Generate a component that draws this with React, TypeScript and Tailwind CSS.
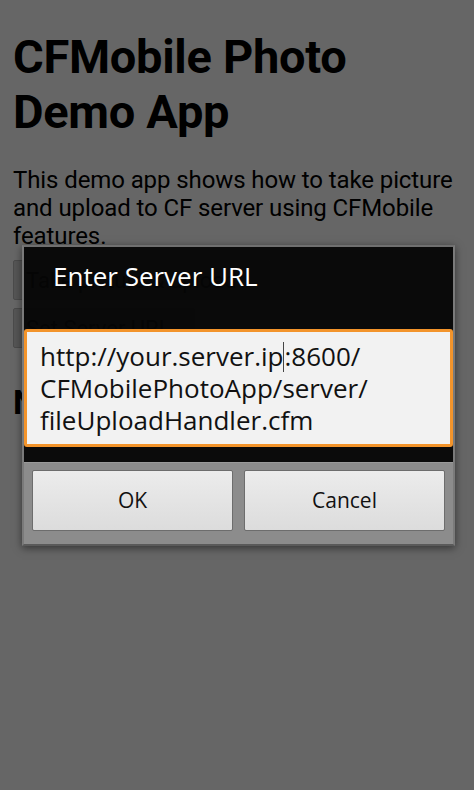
export default function App() {
  return (
    <div className="relative w-[474px] h-[790px] overflow-hidden bg-white font-['Roboto',sans-serif] text-black">
      {/* Page behind the dialog */}
      <div className="px-[13px] pt-[29px]">
        <h1 className="text-[47px] leading-[55px] font-bold tracking-[-0.3px]">
          CFMobile Photo
          <br />
          Demo App
        </h1>
        <p className="mt-[27px] text-[24px] leading-[28px] tracking-[-0.1px]">
          This demo app shows how to take picture and upload to CF server using CFMobile features.
        </p>
        <div className="mt-[10px] flex flex-col items-start gap-[8px]">
          <button className="h-[40px] w-[257px] rounded-[2px] bg-[#d6d6d6] border border-[#bbbbbb] px-3 text-left text-[22px]">
            Take picture &amp; upload
          </button>
          <button className="h-[40px] w-[182px] rounded-[2px] bg-[#d6d6d6] border border-[#bbbbbb] px-3 text-left text-[22px]">
            Set Server URL
          </button>
        </div>
        <h2 className="mt-[34px] text-[34px] leading-[40px] font-bold">No image</h2>
      </div>

      {/* Dim overlay */}
      <div className="absolute inset-0 bg-black/60" />

      {/* Dialog */}
      <div className="absolute left-[22px] top-[245px] w-[433px] border-2 border-t-[#6f6f6f] border-x-[#7a7a7a] border-b-[#5a5a5a] shadow-[0_2px_8px_rgba(0,0,0,0.5)] font-['Open_Sans',sans-serif]">
        <div className="bg-[#050505]/95 h-[82px] pl-[29px] pt-[16px]">
          <span className="block text-white text-[26px] leading-none">Enter Server URL</span>
        </div>
        <div className="bg-[#0b0b0b] pb-[15px]">
          <div className="border-[3px] border-[#f3942b] rounded-[3px] bg-[#f2f2f2] h-[118px] pl-[13px] pt-[8px]">
            <p className="text-[26px] leading-[32px] text-[#111]">
              http://your.server.ip<span className="inline-block w-[1px] h-[30px] bg-[#444] align-middle -mt-[4px]" />:8600/
              <br />
              CFMobilePhotoApp/server/
              <br />
              fileUploadHandler.cfm
            </p>
          </div>
        </div>
        <div className="bg-[#8c8c8c] px-[8px] pt-[7px] pb-[13px] flex gap-[11px] border-t border-[#9a9a9a]">
          <button className="flex-1 h-[61px] rounded-[2px] border border-[#6d6d6d] bg-gradient-to-b from-[#ececec] to-[#dcdcdc] text-[21px] text-[#111]">
            OK
          </button>
          <button className="flex-1 h-[61px] rounded-[2px] border border-[#6d6d6d] bg-gradient-to-b from-[#ececec] to-[#dcdcdc] text-[21px] text-[#111]">
            Cancel
          </button>
        </div>
      </div>
    </div>
  )
}
